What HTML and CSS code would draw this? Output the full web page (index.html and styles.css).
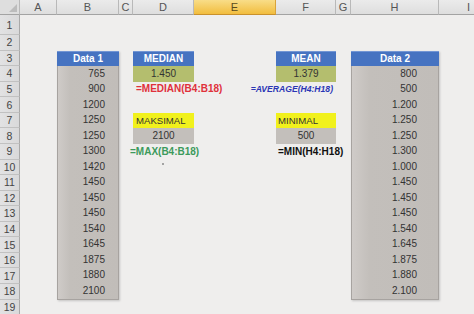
FILE: index.html
```html
<!DOCTYPE html>
<html>
<head>
<meta charset="utf-8">
<link rel="stylesheet" href="styles.css">
</head>
<body>
<div class="sheet">
  <div class="ch corner"><span class="tri"></span></div>
  <div class="ch">A</div>
  <div class="ch">B</div>
  <div class="ch">C</div>
  <div class="ch">D</div>
  <div class="ch sel">E</div>
  <div class="ch">F</div>
  <div class="ch">G</div>
  <div class="ch">H</div>
  <div class="ch last">I</div>

  <div class="rh r1">1</div>
  <div class="rh r2">2</div>
  <div class="rh r3">3</div>
  <div class="rh r4">4</div>
  <div class="rh r5">5</div>
  <div class="rh r6">6</div>
  <div class="rh r7">7</div>
  <div class="rh r8">8</div>
  <div class="rh r9">9</div>
  <div class="rh r10">10</div>
  <div class="rh r11">11</div>
  <div class="rh r12">12</div>
  <div class="rh r13">13</div>
  <div class="rh r14">14</div>
  <div class="rh r15">15</div>
  <div class="rh r16">16</div>
  <div class="rh r17">17</div>
  <div class="rh r18">18</div>
  <div class="rh r19">19</div>

  <div class="table t1">
    <div class="thead">Data 1</div>
    <div class="tbody">
      <div class="v">765</div><div class="v">900</div><div class="v">1200</div>
      <div class="v">1250</div><div class="v">1250</div><div class="v">1300</div>
      <div class="v">1420</div><div class="v">1450</div><div class="v">1450</div>
      <div class="v">1450</div><div class="v">1540</div><div class="v">1645</div>
      <div class="v">1875</div><div class="v">1880</div><div class="v">2100</div>
    </div>
  </div>

  <div class="table t2">
    <div class="thead">Data 2</div>
    <div class="tbody">
      <div class="v">800</div><div class="v">500</div><div class="v">1.200</div>
      <div class="v">1.250</div><div class="v">1.250</div><div class="v">1.300</div>
      <div class="v">1.000</div><div class="v">1.450</div><div class="v">1.450</div>
      <div class="v">1.450</div><div class="v">1.540</div><div class="v">1.645</div>
      <div class="v">1.875</div><div class="v">1.880</div><div class="v">2.100</div>
    </div>
  </div>

  <div class="hdr median">MEDIAN</div>
  <div class="green median-v">1.450</div>
  <div class="f f-median">=MEDIAN(B4:B18)</div>

  <div class="hdr mean">MEAN</div>
  <div class="green mean-v">1.379</div>
  <div class="f f-avg">=AVERAGE(H4:H18)</div>

  <div class="yel maks">MAKSIMAL</div>
  <div class="gray maks-v">2100</div>
  <div class="f f-max">=MAX(B4:B18)</div>
  <div class="dot"></div>

  <div class="yel mini">MINIMAL</div>
  <div class="gray mini-v">500</div>
  <div class="f f-min">=MIN(H4:H18)</div>
</div>
</body>
</html>
```
FILE: styles.css
```css
html, body {
  margin: 0;
  padding: 0;
  width: 474px;
  height: 314px;
  overflow: hidden;
  background: #efeeed;
}
.sheet {
  display: grid;
  grid-template-columns: 20px 37px 62px 14px 61px 82px 60px 15px 88px 60px;
  grid-template-rows: 15px 20px repeat(18, 15.57px);
  font-family: "Liberation Sans", Arial, sans-serif;
  font-size: 10px;
  color: #333;
  background: #efeeed;
  width: 474px;
  overflow: hidden;
}
.ch {
  grid-row: 1;
  background: linear-gradient(#ebebeb, #dedede);
  border-right: 1px solid #b9b9b9;
  border-bottom: 1px solid #a3a3a3;
  color: #555;
  font-size: 11px;
  display: flex;
  align-items: center;
  justify-content: center;
  box-sizing: border-box;
}
.ch.sel {
  background: linear-gradient(#f9dd88, #f2bd3e);
  border-right-color: #d9a33a;
  border-bottom-color: #c9912c;
  color: #5a4a20;
}
.corner {
  position: relative;
  background: #dedede;
}
.tri {
  position: absolute;
  right: 2px;
  bottom: 2px;
  width: 0;
  height: 0;
  border-left: 8px solid transparent;
  border-bottom: 8px solid #bcbcbc;
}
.rh {
  grid-column: 1;
  background: linear-gradient(90deg, #e2e2e3, #d9d9da);
  border-right: 1px solid #a9a9a9;
  border-bottom: 1px solid #c1c1c1;
  box-sizing: border-box;
  color: #444;
  font-size: 10.5px;
  display: flex;
  align-items: center;
  justify-content: center;
}
.r1 { grid-row: 2; } .r2 { grid-row: 3; } .r3 { grid-row: 4; } .r4 { grid-row: 5; }
.r5 { grid-row: 6; } .r6 { grid-row: 7; } .r7 { grid-row: 8; } .r8 { grid-row: 9; }
.r9 { grid-row: 10; } .r10 { grid-row: 11; } .r11 { grid-row: 12; } .r12 { grid-row: 13; }
.r13 { grid-row: 14; } .r14 { grid-row: 15; } .r15 { grid-row: 16; } .r16 { grid-row: 17; }
.r17 { grid-row: 18; } .r18 { grid-row: 19; } .r19 { grid-row: 20; }

.table {
  grid-row: 4 / 20;
  display: flex;
  flex-direction: column;
  box-shadow: 1px 1px 2px rgba(0, 0, 0, 0.18);
}
.t1 { grid-column: 3; }
.t2 { grid-column: 9; }
.thead {
  height: 15.57px;
  flex: none;
  background: #4673c1;
  border-top: 1px solid #7396d4;
  box-sizing: border-box;
  color: #fff;
  font-weight: bold;
  display: flex;
  align-items: center;
  justify-content: center;
}
.tbody {
  flex: 1;
  display: flex;
  flex-direction: column;
  background: linear-gradient(90deg, #cfcbc8, #c3bfbb 20%, #c1bdb9);
  border: 1px solid #a7a3a0;
  border-top: none;
}
.v {
  flex: 1;
  display: flex;
  align-items: center;
  justify-content: flex-end;
  line-height: 1;
}
.t1 .v { padding-right: 13px; }
.t2 .v { padding-right: 21px; }

.hdr, .green, .yel, .gray {
  display: flex;
  align-items: center;
  justify-content: center;
  line-height: 1;
}
.hdr {
  background: #4673c1;
  border-top: 1px solid #7396d4;
  box-sizing: border-box;
  color: #fff;
  font-weight: bold;
}
.green { background: #b4be6e; }
.gray { background: #c3bfbb; }
.yel {
  background: #f1f11c;
  justify-content: flex-start;
  padding-left: 3px;
  font-size: 9.6px;
  color: #333;
}
.median { grid-column: 5; grid-row: 4; }
.median-v { grid-column: 5; grid-row: 5; }
.mean { grid-column: 7; grid-row: 4; }
.mean-v { grid-column: 7; grid-row: 5; }
.maks { grid-column: 5; grid-row: 8; }
.maks-v { grid-column: 5; grid-row: 9; }
.mini { grid-column: 7; grid-row: 8; padding-left: 2px; }
.mini-v { grid-column: 7; grid-row: 9; }

.f {
  font-weight: bold;
  white-space: nowrap;
  display: flex;
  align-items: center;
  line-height: 1;
}
.f-median {
  grid-column: 5 / 7;
  grid-row: 6;
  color: #e0313b;
  padding-left: 3px;
}
.f-avg {
  grid-column: 6 / 8;
  grid-row: 6;
  color: #2a35b5;
  font-style: italic;
  font-size: 8.6px;
  justify-content: flex-end;
  padding-right: 3px;
}
.f-max {
  grid-column: 4 / 7;
  grid-row: 10;
  color: #3c9a5c;
  padding-left: 11px;
}
.f-min {
  grid-column: 7 / 9;
  grid-row: 10;
  color: #111;
  padding-left: 2px;
}
.dot {
  grid-column: 5;
  grid-row: 11;
  justify-self: center;
  align-self: start;
  width: 2px;
  height: 2px;
  margin-top: 3px;
  margin-left: -1px;
  background: #8a8a8a;
  border-radius: 1px;
}
```
